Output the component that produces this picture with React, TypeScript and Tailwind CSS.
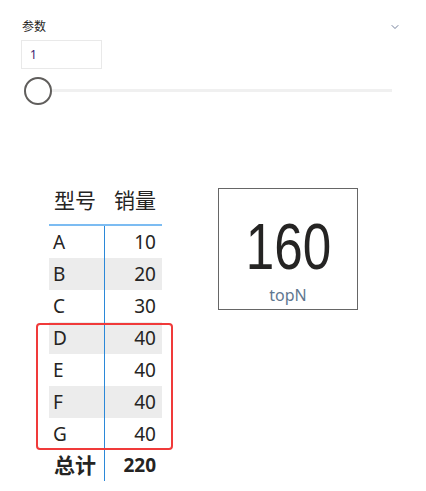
import { ChevronDown } from "lucide-react";

const rows = [
  { model: "A", qty: 10 },
  { model: "B", qty: 20 },
  { model: "C", qty: 30 },
  { model: "D", qty: 40 },
  { model: "E", qty: 40 },
  { model: "F", qty: 40 },
  { model: "G", qty: 40 },
];

const font = { fontFamily: '"Noto Sans", "Noto Sans CJK SC", sans-serif' };

export default function App() {
  return (
    <div className="w-[426px] h-[491px] bg-white text-[#252423] overflow-hidden" style={font}>
      {/* Slicer */}
      <div className="pl-[21px] pr-[24px] pt-[17px]">
        <div className="flex items-center justify-between h-[20px]">
          <span className="text-[12px] pl-px">参数</span>
          <ChevronDown className="w-[12px] h-[12px] text-[#45567a] mr-[1px] mt-[-1px]" strokeWidth={1.5} />
        </div>
        <div className="mt-[3px] w-[81px] h-[29px] border border-[#e9e9e9] flex items-center pl-[8px] text-[12px] text-[#3b2470]">
          1
        </div>
        <div className="relative mt-[8px] h-[28px] ml-[3px] w-[368px]">
          <div className="absolute left-[28px] right-0 top-[12px] h-[3px] bg-[#f0f0f0]" />
          <div className="absolute left-0 top-0 w-[28px] h-[28px] rounded-full border-2 border-[#605e5c] bg-white" />
        </div>
      </div>

      {/* Table + card */}
      <div className="flex items-start mt-[80px] pl-[49px]">
        <div className="relative w-[113px]">
          <div className="flex h-[41px] items-center pb-[8px] text-[21px] border-b-2 border-[#7cbcf2]">
            <div className="w-[56px] pl-[5px]">型号</div>
            <div className="w-[57px] text-right pr-[6px]">销量</div>
          </div>
          {rows.map((r, i) => (
            <div key={r.model} className={`flex h-[32px] items-center text-[19px] ${i % 2 === 1 ? "bg-[#ececec]" : ""}`}>
              <div className="w-[56px] h-full flex items-center pl-[4px] border-r border-[#2b88d8]">{r.model}</div>
              <div className="w-[57px] text-right pr-[6px]">{r.qty}</div>
            </div>
          ))}
          <div className="flex h-[31px] items-center text-[19px] font-bold">
            <div className="w-[56px] h-full flex items-center pl-[5px] text-[21px] border-r border-[#2b88d8]">总计</div>
            <div className="w-[57px] text-right pr-[6px]">220</div>
          </div>
          <div className="absolute left-[-13px] top-[138px] w-[137px] h-[127px] border-2 border-[#f03a3a] rounded-[4px]" />
        </div>

        <div className="ml-[56px] mt-[3px] w-[140px] h-[122px] border border-[#666666] flex flex-col items-center">
          <div
            className="mt-[28px] h-[60px] flex items-center text-[64px] leading-none text-[#252423] scale-x-[0.8]"
            style={{ fontFamily: '"Liberation Sans", sans-serif' }}
          >
            160
          </div>
          <div className="mt-[6px] text-[16px] text-[#5f7790]">topN</div>
        </div>
      </div>
    </div>
  );
}
